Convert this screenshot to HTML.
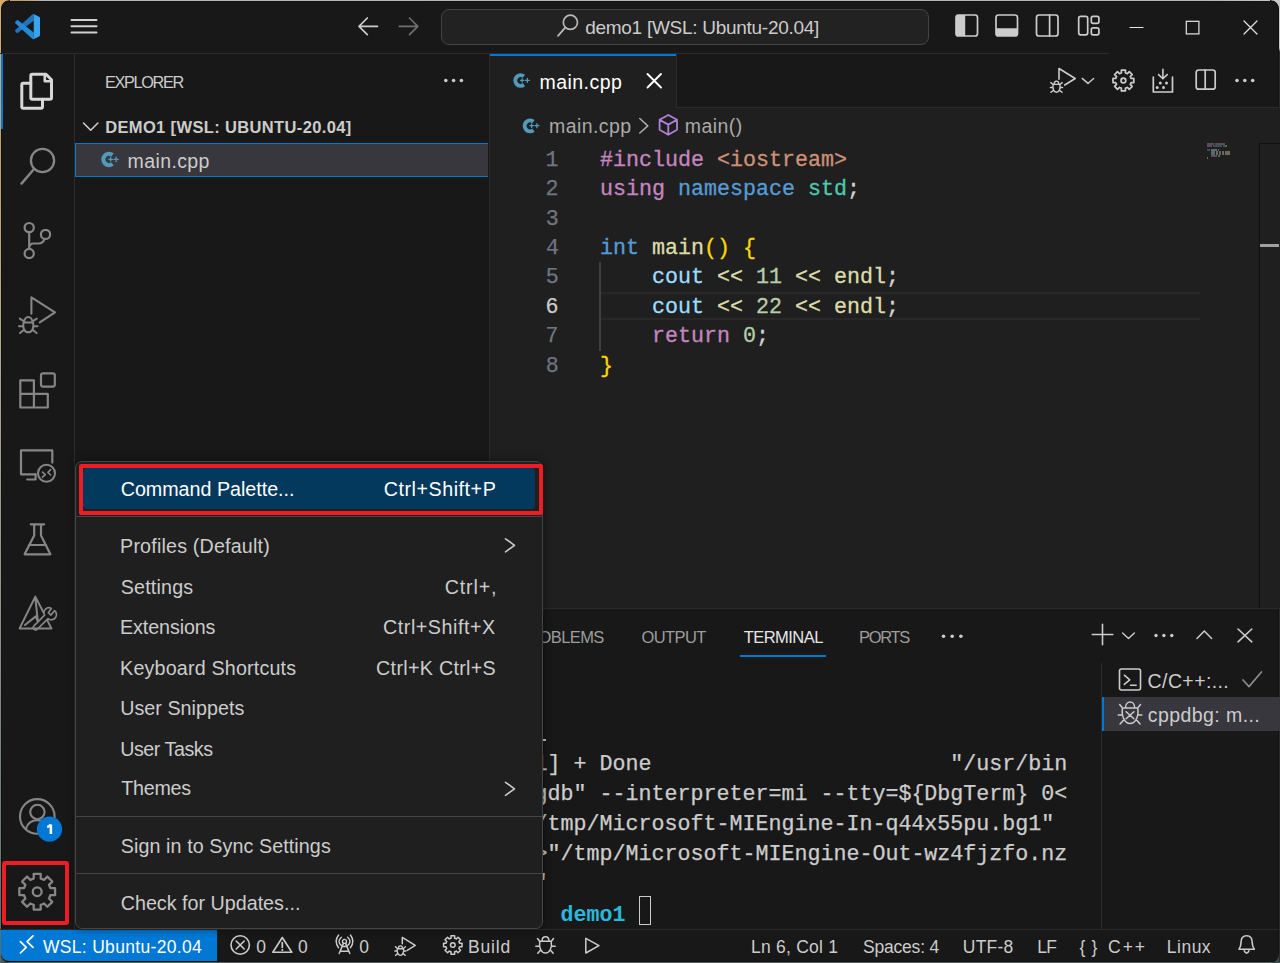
<!DOCTYPE html>
<html><head><meta charset="utf-8">
<style>
*{box-sizing:border-box;margin:0;padding:0}
html,body{width:1280px;height:963px;overflow:hidden;background:#181818}
body{position:relative;font-family:"Liberation Sans",sans-serif;color:#cccccc}
.a{position:absolute}
.t{position:absolute;white-space:pre;line-height:1}
svg{position:absolute;overflow:visible}
</style></head>
<body>
<div class="a" style="left:0px;top:0px;width:1280px;height:963px;background:#181818;"></div>
<div class="a" style="left:0;top:0;width:1280px;height:1px;background:linear-gradient(90deg,#c9a060 0,#c0a070 25px,#b8b8b8 45px,#b5b5b5 1200px,#c8c8c8 100%)"></div>
<div class="a" style="left:0;top:0;width:1px;height:963px;background:linear-gradient(180deg,#d8b070 0,#c0a070 150px,#b0a890 350px,#8a9088 650px,#5a6a68 100%)"></div>
<div class="a" style="left:1279px;top:0;width:1px;height:963px;background:linear-gradient(180deg,#c8c8c8 0,#c8c8c8 48px,#2c2c2c 52px,#2c2c2c 100%)"></div>
<div class="a" style="left:0;top:962px;width:1280px;height:1px;background:#566563"></div>
<div class="a" style="left:1px;top:1px;width:1278px;height:1px;background:#111111;"></div>
<div class="a" style="left:1px;top:1px;width:1px;height:961px;background:#111111;"></div>
<div class="a" style="left:1278px;top:1px;width:1px;height:961px;background:#111111;"></div>
<div class="a" style="left:1px;top:961px;width:1278px;height:1px;background:#111111;"></div>
<div class="a" style="left:490px;top:108px;width:790px;height:500px;background:#1f1f1f;"></div>
<div class="a" style="left:0px;top:53px;width:1109px;height:1px;background:#2b2b2b;"></div>
<div class="a" style="left:74px;top:54px;width:1px;height:875px;background:#2b2b2b;"></div>
<div class="a" style="left:489px;top:54px;width:1px;height:555px;background:#2b2b2b;"></div>
<div class="a" style="left:676px;top:107px;width:604px;height:1px;background:#2b2b2b;"></div>
<div class="a" style="left:490px;top:54px;width:186px;height:54px;background:#1f1f1f;border-top:2px solid #0078d4;"></div>
<div class="a" style="left:676px;top:54px;width:1px;height:53px;background:#2b2b2b;"></div>
<div class="a" style="left:490px;top:608px;width:790px;height:1px;background:#2b2b2b;"></div>
<div class="a" style="left:0px;top:929px;width:1280px;height:1px;background:#2b2b2b;"></div>
<div class="a" style="left:1px;top:930px;width:216px;height:31px;background:#0078d4;border-bottom-left-radius:8px;"></div>
<div class="a" style="left:441px;top:9px;width:488px;height:36px;background:#222222;border:1px solid #444444;border-radius:8px;"></div>
<div class="t" style="left:585.20px;top:18.22px;font-size:19px;color:#cccccc;font-weight:400;font-family:'Liberation Sans',sans-serif;letter-spacing:-0.277px;">demo1 [WSL: Ubuntu-20.04]</div>
<div class="t" style="left:104.96px;top:74.30px;font-size:16.3px;color:#cccccc;font-weight:400;font-family:'Liberation Sans',sans-serif;letter-spacing:-1.340px;">EXPLORER</div>
<div class="t" style="left:105.19px;top:118.73px;font-size:16.5px;color:#cccccc;font-weight:700;font-family:'Liberation Sans',sans-serif;letter-spacing:0.358px;">DEMO1 [WSL: UBUNTU-20.04]</div>
<div class="a" style="left:75px;top:143px;width:413px;height:34px;background:#37373d;border:1px solid #0078d4;border-right:none;"></div>
<div class="t" style="left:127.61px;top:152.29px;font-size:19.5px;color:#cccccc;font-weight:400;font-family:'Liberation Sans',sans-serif;letter-spacing:0.385px;">main.cpp</div>
<div class="t" style="left:539.51px;top:72.89px;font-size:19.5px;color:#ffffff;font-weight:400;font-family:'Liberation Sans',sans-serif;letter-spacing:0.456px;">main.cpp</div>
<div class="t" style="left:549.01px;top:117.49px;font-size:19.5px;color:#a9a9a9;font-weight:400;font-family:'Liberation Sans',sans-serif;letter-spacing:0.414px;">main.cpp</div>
<div class="t" style="left:684.71px;top:117.49px;font-size:19.5px;color:#a9a9a9;font-weight:400;font-family:'Liberation Sans',sans-serif;letter-spacing:0.447px;">main()</div>
<div class="t" style="left:600.00px;top:149.69px;font-size:21.67px;color:#c586c0;font-family:'Liberation Mono',monospace;-webkit-text-stroke:0.3px #c586c0">#include</div>
<div class="t" style="left:717.00px;top:149.69px;font-size:21.67px;color:#ce9178;font-family:'Liberation Mono',monospace;-webkit-text-stroke:0.3px #ce9178">&lt;iostream&gt;</div>
<div class="t" style="left:600.00px;top:179.14px;font-size:21.67px;color:#c586c0;font-family:'Liberation Mono',monospace;-webkit-text-stroke:0.3px #c586c0">using</div>
<div class="t" style="left:678.00px;top:179.14px;font-size:21.67px;color:#569cd6;font-family:'Liberation Mono',monospace;-webkit-text-stroke:0.3px #569cd6">namespace</div>
<div class="t" style="left:808.00px;top:179.14px;font-size:21.67px;color:#4ec9b0;font-family:'Liberation Mono',monospace;-webkit-text-stroke:0.3px #4ec9b0">std</div>
<div class="t" style="left:847.00px;top:179.14px;font-size:21.67px;color:#d4d4d4;font-family:'Liberation Mono',monospace;-webkit-text-stroke:0.3px #d4d4d4">;</div>
<div class="t" style="left:600.00px;top:238.04px;font-size:21.67px;color:#569cd6;font-family:'Liberation Mono',monospace;-webkit-text-stroke:0.3px #569cd6">int</div>
<div class="t" style="left:652.00px;top:238.04px;font-size:21.67px;color:#dcdcaa;font-family:'Liberation Mono',monospace;-webkit-text-stroke:0.3px #dcdcaa">main</div>
<div class="t" style="left:704.00px;top:238.04px;font-size:21.67px;color:#ffd700;font-family:'Liberation Mono',monospace;-webkit-text-stroke:0.3px #ffd700">()</div>
<div class="t" style="left:743.00px;top:238.04px;font-size:21.67px;color:#ffd700;font-family:'Liberation Mono',monospace;-webkit-text-stroke:0.3px #ffd700">{</div>
<div class="t" style="left:652.00px;top:267.49px;font-size:21.67px;color:#9cdcfe;font-family:'Liberation Mono',monospace;-webkit-text-stroke:0.3px #9cdcfe">cout</div>
<div class="t" style="left:717.00px;top:267.49px;font-size:21.67px;color:#dcdcaa;font-family:'Liberation Mono',monospace;-webkit-text-stroke:0.3px #dcdcaa">&lt;&lt;</div>
<div class="t" style="left:756.00px;top:267.49px;font-size:21.67px;color:#b5cea8;font-family:'Liberation Mono',monospace;-webkit-text-stroke:0.3px #b5cea8">11</div>
<div class="t" style="left:795.00px;top:267.49px;font-size:21.67px;color:#dcdcaa;font-family:'Liberation Mono',monospace;-webkit-text-stroke:0.3px #dcdcaa">&lt;&lt;</div>
<div class="t" style="left:834.00px;top:267.49px;font-size:21.67px;color:#dcdcaa;font-family:'Liberation Mono',monospace;-webkit-text-stroke:0.3px #dcdcaa">endl</div>
<div class="t" style="left:886.00px;top:267.49px;font-size:21.67px;color:#d4d4d4;font-family:'Liberation Mono',monospace;-webkit-text-stroke:0.3px #d4d4d4">;</div>
<div class="t" style="left:652.00px;top:296.94px;font-size:21.67px;color:#9cdcfe;font-family:'Liberation Mono',monospace;-webkit-text-stroke:0.3px #9cdcfe">cout</div>
<div class="t" style="left:717.00px;top:296.94px;font-size:21.67px;color:#dcdcaa;font-family:'Liberation Mono',monospace;-webkit-text-stroke:0.3px #dcdcaa">&lt;&lt;</div>
<div class="t" style="left:756.00px;top:296.94px;font-size:21.67px;color:#b5cea8;font-family:'Liberation Mono',monospace;-webkit-text-stroke:0.3px #b5cea8">22</div>
<div class="t" style="left:795.00px;top:296.94px;font-size:21.67px;color:#dcdcaa;font-family:'Liberation Mono',monospace;-webkit-text-stroke:0.3px #dcdcaa">&lt;&lt;</div>
<div class="t" style="left:834.00px;top:296.94px;font-size:21.67px;color:#dcdcaa;font-family:'Liberation Mono',monospace;-webkit-text-stroke:0.3px #dcdcaa">endl</div>
<div class="t" style="left:886.00px;top:296.94px;font-size:21.67px;color:#d4d4d4;font-family:'Liberation Mono',monospace;-webkit-text-stroke:0.3px #d4d4d4">;</div>
<div class="t" style="left:652.00px;top:326.39px;font-size:21.67px;color:#c586c0;font-family:'Liberation Mono',monospace;-webkit-text-stroke:0.3px #c586c0">return</div>
<div class="t" style="left:743.00px;top:326.39px;font-size:21.67px;color:#b5cea8;font-family:'Liberation Mono',monospace;-webkit-text-stroke:0.3px #b5cea8">0</div>
<div class="t" style="left:756.00px;top:326.39px;font-size:21.67px;color:#d4d4d4;font-family:'Liberation Mono',monospace;-webkit-text-stroke:0.3px #d4d4d4">;</div>
<div class="t" style="left:600.00px;top:355.84px;font-size:21.67px;color:#ffd700;font-family:'Liberation Mono',monospace;-webkit-text-stroke:0.3px #ffd700">}</div>
<div class="t" style="left:545.54px;top:149.69px;font-size:21.67px;color:#6e7681;font-weight:400;font-family:'Liberation Mono',monospace;letter-spacing:0.000px;-webkit-text-stroke:0.25px #6e7681;">1</div>
<div class="t" style="left:545.58px;top:179.14px;font-size:21.67px;color:#6e7681;font-weight:400;font-family:'Liberation Mono',monospace;letter-spacing:0.000px;-webkit-text-stroke:0.25px #6e7681;">2</div>
<div class="t" style="left:545.73px;top:208.59px;font-size:21.67px;color:#6e7681;font-weight:400;font-family:'Liberation Mono',monospace;letter-spacing:0.000px;-webkit-text-stroke:0.25px #6e7681;">3</div>
<div class="t" style="left:546.02px;top:238.04px;font-size:21.67px;color:#6e7681;font-weight:400;font-family:'Liberation Mono',monospace;letter-spacing:0.000px;-webkit-text-stroke:0.25px #6e7681;">4</div>
<div class="t" style="left:545.73px;top:267.49px;font-size:21.67px;color:#6e7681;font-weight:400;font-family:'Liberation Mono',monospace;letter-spacing:0.000px;-webkit-text-stroke:0.25px #6e7681;">5</div>
<div class="t" style="left:545.50px;top:296.94px;font-size:21.67px;color:#cccccc;font-weight:400;font-family:'Liberation Mono',monospace;letter-spacing:0.000px;-webkit-text-stroke:0.25px #cccccc;">6</div>
<div class="t" style="left:545.43px;top:326.39px;font-size:21.67px;color:#6e7681;font-weight:400;font-family:'Liberation Mono',monospace;letter-spacing:0.000px;-webkit-text-stroke:0.25px #6e7681;">7</div>
<div class="t" style="left:545.69px;top:355.84px;font-size:21.67px;color:#6e7681;font-weight:400;font-family:'Liberation Mono',monospace;letter-spacing:0.000px;-webkit-text-stroke:0.25px #6e7681;">8</div>
<div class="t" style="left:641.52px;top:628.93px;font-size:16.5px;color:#9d9d9d;font-weight:400;font-family:'Liberation Sans',sans-serif;letter-spacing:-0.615px;">OUTPUT</div>
<div class="t" style="left:743.74px;top:628.93px;font-size:16.5px;color:#e7e7e7;font-weight:400;font-family:'Liberation Sans',sans-serif;letter-spacing:-0.545px;">TERMINAL</div>
<div class="a" style="left:740px;top:655px;width:86px;height:2px;background:#0078d4;"></div>
<div class="t" style="left:859.05px;top:628.93px;font-size:16.5px;color:#9d9d9d;font-weight:400;font-family:'Liberation Sans',sans-serif;letter-spacing:-1.333px;">PORTS</div>
<div class="t" style="left:516.85px;top:628.93px;font-size:16.5px;color:#9d9d9d;font-weight:400;font-family:'Liberation Sans',sans-serif;letter-spacing:-0.600px;">PROBLEMS</div>
<div class="a" style="left:1101px;top:663px;width:1px;height:266px;background:#2b2b2b;"></div>
<div class="t" style="left:1147.61px;top:672.09px;font-size:19.5px;color:#cccccc;font-weight:400;font-family:'Liberation Sans',sans-serif;letter-spacing:0.391px;">C/C++:...</div>
<div class="a" style="left:1102px;top:697px;width:178px;height:34px;background:#37373d;"></div>
<div class="a" style="left:1102px;top:697px;width:2px;height:34px;background:#0078d4;"></div>
<div class="t" style="left:1147.78px;top:705.99px;font-size:19.5px;color:#cccccc;font-weight:400;font-family:'Liberation Sans',sans-serif;letter-spacing:0.426px;">cppdbg: m...</div>
<div class="a" style="left:1px;top:54px;width:2.4px;height:75px;background:#0078d4;"></div>
<div class="a" style="left:600px;top:292px;width:600px;height:2px;background:#282828;"></div>
<div class="a" style="left:600px;top:318px;width:600px;height:2px;background:#282828;"></div>
<div class="a" style="left:599px;top:262px;width:2px;height:89px;background:#404040;"></div>
<div class="a" style="left:1259px;top:143px;width:1px;height:465px;background:#111111;"></div>
<div class="a" style="left:1259px;top:143px;width:21px;height:1px;background:#111111;"></div>
<div class="a" style="left:1260px;top:244px;width:19px;height:3px;background:#a0a0a0;"></div>
<div class="a" style="left:1206.9px;top:143.2px;width:7.0px;height:1.5px;background:#c586c0;opacity:.4;"></div>
<div class="a" style="left:1214.9px;top:143.2px;width:10.0px;height:1.5px;background:#ce9178;opacity:.4;"></div>
<div class="a" style="left:1206.9px;top:145.2px;width:5.0px;height:1.5px;background:#c586c0;opacity:.4;"></div>
<div class="a" style="left:1212.9px;top:145.2px;width:9.0px;height:1.5px;background:#569cd6;opacity:.4;"></div>
<div class="a" style="left:1222.9px;top:145.2px;width:3.0px;height:1.5px;background:#4ec9b0;opacity:.4;"></div>
<div class="a" style="left:1225.9px;top:145.2px;width:1.0px;height:1.5px;background:#d4d4d4;opacity:.4;"></div>
<div class="a" style="left:1206.9px;top:149.2px;width:3.0px;height:1.5px;background:#569cd6;opacity:.4;"></div>
<div class="a" style="left:1210.9px;top:149.2px;width:4.0px;height:1.5px;background:#dcdcaa;opacity:.4;"></div>
<div class="a" style="left:1214.9px;top:149.2px;width:2.0px;height:1.5px;background:#d4d4d4;opacity:.4;"></div>
<div class="a" style="left:1217.9px;top:149.2px;width:1.0px;height:1.5px;background:#d4d4d4;opacity:.4;"></div>
<div class="a" style="left:1210.9px;top:151.2px;width:4.0px;height:1.5px;background:#9cdcfe;opacity:.4;"></div>
<div class="a" style="left:1215.9px;top:151.2px;width:2.0px;height:1.5px;background:#d4d4d4;opacity:.4;"></div>
<div class="a" style="left:1218.9px;top:151.2px;width:2.0px;height:1.5px;background:#b5cea8;opacity:.4;"></div>
<div class="a" style="left:1221.9px;top:151.2px;width:2.0px;height:1.5px;background:#d4d4d4;opacity:.4;"></div>
<div class="a" style="left:1224.9px;top:151.2px;width:5.0px;height:1.5px;background:#dcdcaa;opacity:.4;"></div>
<div class="a" style="left:1210.9px;top:153.2px;width:4.0px;height:1.5px;background:#9cdcfe;opacity:.4;"></div>
<div class="a" style="left:1215.9px;top:153.2px;width:2.0px;height:1.5px;background:#d4d4d4;opacity:.4;"></div>
<div class="a" style="left:1218.9px;top:153.2px;width:2.0px;height:1.5px;background:#b5cea8;opacity:.4;"></div>
<div class="a" style="left:1221.9px;top:153.2px;width:2.0px;height:1.5px;background:#d4d4d4;opacity:.4;"></div>
<div class="a" style="left:1224.9px;top:153.2px;width:5.0px;height:1.5px;background:#dcdcaa;opacity:.4;"></div>
<div class="a" style="left:1210.9px;top:155.2px;width:6.0px;height:1.5px;background:#c586c0;opacity:.4;"></div>
<div class="a" style="left:1217.9px;top:155.2px;width:2.0px;height:1.5px;background:#b5cea8;opacity:.4;"></div>
<div class="a" style="left:1206.9px;top:157.2px;width:1.0px;height:1.5px;background:#d4d4d4;opacity:.4;"></div>
<svg style="left:0;top:0" width="1280" height="963" viewBox="0 0 1280 963"><g transform="translate(15,14) scale(0.25)"><path fill="#1f74bd" d="M1.1 64 L68.8 2.1 Q71 0 75 1 L75 27 L12 75.4 Q9 77 6.6 75.2 L1.1 70.2 Q-0.7 67 1.1 64 Z"/><path fill="#238ada" d="M1.1 36.7 Q-0.7 33 1.1 30.6 L6.6 25.6 Q9 23.5 12 25.3 L75 73.7 V99 Q71 101 68.8 98.7 Z"/><path fill="#3aa3f0" d="M75.86.87 96.46 10.8A6.24 6.24 0 0 1 100 16.44V84.3a6.24 6.24 0 0 1-3.54 5.64L75.86 99.87a6.23 6.23 0 0 1-7.1-1.2c2.3 2.3 6.26.67 6.26-2.6V4.67c0-3.27-3.96-4.9-6.26-2.6a6.23 6.23 0 0 1 7.1-1.2Z"/></g><path d="M71.5 20 H96.5 M71.5 26.3 H96.5 M71.5 32.6 H96.5" fill="none" stroke="#d0d0d0" stroke-width="2" stroke-linecap="round" stroke-linejoin="round" stroke-linecap="butt"/><path d="M377.5 26.3 H359.3 M367.3 18 L359 26.3 L367.3 34.6" fill="none" stroke="#cccccc" stroke-width="1.7" stroke-linecap="round" stroke-linejoin="round" /><path d="M399.3 26.3 H417.5 M409.5 18 L417.8 26.3 L409.5 34.6" fill="none" stroke="#6f6f6f" stroke-width="1.7" stroke-linecap="round" stroke-linejoin="round" /><circle cx="570.4" cy="22.3" r="7.1" fill="none" stroke="#b8b8b8" stroke-width="1.7"/><path d="M565.2 27.6 L558 35.8" fill="none" stroke="#b8b8b8" stroke-width="1.8" stroke-linecap="round" stroke-linejoin="round" /><rect x="956" y="15" width="21.5" height="21" rx="2.5" fill="none" stroke="#cccccc" stroke-width="1.7"/><path d="M956 17.5 Q956 15 958.5 15 H965.2 V36 H958.5 Q956 36 956 33.5 Z" fill="#cccccc" /><rect x="996" y="15" width="21.5" height="21" rx="2.5" fill="none" stroke="#cccccc" stroke-width="1.7"/><path d="M996 28.3 H1017.5 V33.5 Q1017.5 36 1015 36 H998.5 Q996 36 996 33.5 Z" fill="#cccccc" /><rect x="1036.5" y="15" width="21.5" height="21" rx="2.5" fill="none" stroke="#cccccc" stroke-width="1.7"/><path d="M1049.6 15 V36" fill="none" stroke="#cccccc" stroke-width="1.7" stroke-linecap="round" stroke-linejoin="round" /><rect x="1078.7" y="16.3" width="9" height="18.5" rx="2" fill="none" stroke="#cccccc" stroke-width="1.7"/><rect x="1091.3" y="16.3" width="7.6" height="7" rx="1.8" fill="none" stroke="#cccccc" stroke-width="1.7"/><rect x="1091.3" y="27.8" width="7.6" height="7" rx="1.8" fill="none" stroke="#cccccc" stroke-width="1.7"/><path d="M1130 27.5 H1143" fill="none" stroke="#e6e6e6" stroke-width="1.2" stroke-linecap="round" stroke-linejoin="round" stroke-linecap="butt"/><rect x="1186.3" y="21.3" width="12.6" height="12.6" rx="0" fill="none" stroke="#e6e6e6" stroke-width="1.2"/><path d="M1244 21 L1257 34 M1257 21 L1244 34" fill="none" stroke="#e6e6e6" stroke-width="1.2" stroke-linecap="round" stroke-linejoin="round" stroke-linecap="butt"/><path d="M32.3 74.3 H46 L51.5 79.8 V97.8 Q51.5 99.3 50 99.3 H32.3 Q30.8 99.3 30.8 97.8 V75.8 Q30.8 74.3 32.3 74.3 Z" fill="none" stroke="#d7d7d7" stroke-width="3" stroke-linecap="round" stroke-linejoin="round" stroke-linejoin="miter"/><path d="M44.8 74.5 V81.2 H51.3" fill="none" stroke="#d7d7d7" stroke-width="2.6" stroke-linecap="round" stroke-linejoin="round" stroke-linejoin="miter"/><path d="M30.8 83.3 H23.3 Q21.8 83.3 21.8 84.8 V106.8 Q21.8 108.3 23.3 108.3 H41 Q42.5 108.3 42.5 106.8 V99.3" fill="none" stroke="#d7d7d7" stroke-width="3" stroke-linecap="round" stroke-linejoin="round" stroke-linejoin="miter"/><circle cx="42.5" cy="160.5" r="11.6" fill="none" stroke="#868686" stroke-width="2.3"/><path d="M34.2 168.8 L21.5 183.6" fill="none" stroke="#868686" stroke-width="2.4" stroke-linecap="round" stroke-linejoin="round" stroke-linecap="butt"/><circle cx="29.2" cy="227.6" r="4.6" fill="none" stroke="#868686" stroke-width="2.2"/><circle cx="29.2" cy="253.5" r="4.6" fill="none" stroke="#868686" stroke-width="2.2"/><circle cx="45.5" cy="234.4" r="4.6" fill="none" stroke="#868686" stroke-width="2.2"/><path d="M29.2 232.2 V248.9 M44.5 239 Q43 243.5 38.5 243.5 H33.5 Q29.8 243.5 29.2 247.5" fill="none" stroke="#868686" stroke-width="2.2" stroke-linecap="round" stroke-linejoin="round" /><path d="M31.4 313.8 V297.4 L55 312.3 L39.8 322.4" fill="none" stroke="#868686" stroke-width="2.1" stroke-linecap="round" stroke-linejoin="round" stroke-linecap="butt" stroke-linejoin="miter"/><path d="M23.5 322.6 C22.4 328 24.5 332.3 28.3 332.3 C32.1 332.3 34.2 328 33.1 322.6 Z M24.2 322.6 C24.2 315.2 32.4 315.2 32.4 322.6 M23.3 320.8 L19.8 318.6 M33.3 320.8 L36.8 318.6 M22.9 326.2 H19 M33.7 326.2 H37.6 M23.4 330.2 L20 333 M33.2 330.2 L36.6 333" fill="none" stroke="#868686" stroke-width="2.0" stroke-linecap="round" stroke-linejoin="round" /><path d="M20.3 380.3 H33.9 V393.9 H47.8 V407.5 H20.3 Z M33.9 393.9 V407.5 M20.3 393.9 H33.9" fill="none" stroke="#868686" stroke-width="2.2" stroke-linecap="round" stroke-linejoin="round" stroke-linejoin="round"/><rect x="41" y="373.3" width="13.8" height="13.3" rx="2" fill="none" stroke="#868686" stroke-width="2.2"/><path d="M35.6 474.3 H21 V450.4 H52.3 V462.6" fill="none" stroke="#868686" stroke-width="2.2" stroke-linecap="round" stroke-linejoin="round" stroke-linecap="butt" stroke-linejoin="round"/><path d="M27.2 479.5 H35.6 V474.3" fill="none" stroke="#868686" stroke-width="2.2" stroke-linecap="round" stroke-linejoin="round" stroke-linecap="butt" stroke-linejoin="round"/><circle cx="46.5" cy="473.2" r="8.5" fill="none" stroke="#868686" stroke-width="2.0"/><path d="M42.5 472.1 L45.3 474.6 L42.5 477.2 M50.7 469.7 L47.9 472.3 L50.7 475" fill="none" stroke="#868686" stroke-width="1.6" stroke-linecap="round" stroke-linejoin="round" /><path d="M30.8 524.3 H44.2 M34.2 524.3 V535.5 L24.6 554.3 H50.4 L41 535.5 V524.3 M28.9 545 H46.1" fill="none" stroke="#868686" stroke-width="2.2" stroke-linecap="round" stroke-linejoin="round" stroke-linejoin="round"/><path d="M43.4 612.2 L35.3 596.6 L19.6 628.4 H51.4 L47.3 620.4 M35.3 597.5 L37.9 621.6 M25 625 L35.7 616.4 L37.9 621.6" fill="none" stroke="#868686" stroke-width="2.0" stroke-linecap="round" stroke-linejoin="round" stroke-linejoin="round"/><path d="M54.6 610.6 A5 5 0 1 1 48 618.6 L37.4 629.2 A2.4 2.4 0 0 1 34 625.8 L44.6 615.2 A5 5 0 0 1 51.4 608.4 L48.3 612.7 L50.8 615.1 Z" fill="none" stroke="#868686" stroke-width="1.7" stroke-linecap="round" stroke-linejoin="round" stroke-linejoin="round"/><circle cx="37.3" cy="816.4" r="17.3" fill="none" stroke="#868686" stroke-width="2.1"/><circle cx="37.4" cy="812" r="7.2" fill="none" stroke="#868686" stroke-width="2.1"/><path d="M26 828.6 Q28.5 820.2 37.4 820.2 Q46.3 820.2 48.8 828.6" fill="none" stroke="#868686" stroke-width="2.1" stroke-linecap="round" stroke-linejoin="round" /><circle cx="49.5" cy="829.2" r="12.6" fill="#0078d4"/><path d="M33.20 878.70 L33.71 878.55 L33.68 873.84 L40.72 873.84 L40.69 878.55 L41.20 878.70 L43.56 879.68 L44.03 879.94 L47.34 876.59 L52.31 881.56 L48.96 884.87 L49.22 885.34 L50.20 887.70 L50.35 888.21 L55.06 888.18 L55.06 895.22 L50.35 895.19 L50.20 895.70 L49.22 898.06 L48.96 898.53 L52.31 901.84 L47.34 906.81 L44.03 903.46 L43.56 903.72 L41.20 904.70 L40.69 904.85 L40.72 909.56 L33.68 909.56 L33.71 904.85 L33.20 904.70 L30.84 903.72 L30.37 903.46 L27.06 906.81 L22.09 901.84 L25.44 898.53 L25.18 898.06 L24.20 895.70 L24.05 895.19 L19.34 895.22 L19.34 888.18 L24.05 888.21 L24.20 887.70 L25.18 885.34 L25.44 884.87 L22.09 881.56 L27.06 876.59 L30.37 879.94 L30.84 879.68 Z" fill="none" stroke="#868686" stroke-width="2.3" stroke-linecap="round" stroke-linejoin="round" /><circle cx="37.2" cy="891.7" r="4.4" fill="none" stroke="#868686" stroke-width="2.3"/><path d="M83.5 123 L90.7 130.2 L97.9 123" fill="none" stroke="#cccccc" stroke-width="1.6" stroke-linecap="round" stroke-linejoin="round" /><circle cx="445.8" cy="80.5" r="1.8" fill="#cccccc"/><circle cx="453.6" cy="80.5" r="1.8" fill="#cccccc"/><circle cx="461.4" cy="80.5" r="1.8" fill="#cccccc"/><path d="M112.48 155.00 A5.65 5.65 0 1 0 112.48 163.90" fill="none" stroke="#519aba" stroke-width="4.20"/><path d="M108.80 159.30 H112.40 M110.60 157.50 V161.10" fill="none" stroke="#519aba" stroke-width="1.35" stroke-linecap="round" stroke-linejoin="round" stroke-linecap="butt"/><path d="M113.90 159.30 H118.30 M116.10 157.10 V161.50" fill="none" stroke="#519aba" stroke-width="1.35" stroke-linecap="round" stroke-linejoin="round" stroke-linecap="butt"/><path d="M523.90 76.30 A5.31 5.31 0 1 0 523.90 84.67" fill="none" stroke="#519aba" stroke-width="3.95"/><path d="M520.44 80.34 H523.83 M522.14 78.65 V82.04" fill="none" stroke="#519aba" stroke-width="1.269" stroke-linecap="round" stroke-linejoin="round" stroke-linecap="butt"/><path d="M525.24 80.34 H529.37 M527.31 78.28 V82.41" fill="none" stroke="#519aba" stroke-width="1.269" stroke-linecap="round" stroke-linejoin="round" stroke-linecap="butt"/><path d="M647.5 74 L661 87.5 M661 74 L647.5 87.5" fill="none" stroke="#ffffff" stroke-width="1.9" stroke-linecap="round" stroke-linejoin="round" stroke-linecap="butt"/><path d="M533.43 121.57 A5.42 5.42 0 1 0 533.43 130.11" fill="none" stroke="#519aba" stroke-width="4.03"/><path d="M529.90 125.70 H533.35 M531.62 123.97 V127.42" fill="none" stroke="#519aba" stroke-width="1.296" stroke-linecap="round" stroke-linejoin="round" stroke-linecap="butt"/><path d="M534.79 125.70 H539.02 M536.90 123.58 V127.81" fill="none" stroke="#519aba" stroke-width="1.296" stroke-linecap="round" stroke-linejoin="round" stroke-linecap="butt"/><path d="M639.8 118.5 L647.8 125.8 L639.8 133" fill="none" stroke="#a9a9a9" stroke-width="1.6" stroke-linecap="round" stroke-linejoin="round" /><path d="M668.3 115 L677 119.8 V129.8 L668.3 134.8 L659.6 129.8 V119.8 Z M659.6 119.8 L668.3 124.6 L677 119.8 M668.3 124.6 V134.8" fill="none" stroke="#b180d7" stroke-width="1.8" stroke-linecap="round" stroke-linejoin="round" stroke-linejoin="round"/><path d="M1059 79.3 V68.5 L1075.2 78.5 L1064.7 85" fill="none" stroke="#cccccc" stroke-width="1.6" stroke-linecap="round" stroke-linejoin="round" stroke-linecap="butt" stroke-linejoin="miter"/><path d="M1053.1 84.4 C1052.3 89 1054 92.3 1056.5 92.3 C1059 92.3 1060.7 89 1059.9 84.4 Z M1054.1 84.4 C1054.1 80 1058.9 80 1058.9 84.4 M1053 84.5 L1050.8 82.6 M1060 84.5 L1062.2 82.6 M1052.7 87.5 H1050.4 M1060.3 87.5 H1062.6 M1053.2 90.6 L1050.9 92.3 M1059.8 90.6 L1062.1 92.3" fill="none" stroke="#cccccc" stroke-width="1.4" stroke-linecap="round" stroke-linejoin="round" /><path d="M1082.2 78.4 L1088 83.4 L1093.6 78.4" fill="none" stroke="#cccccc" stroke-width="1.4" stroke-linecap="round" stroke-linejoin="round" /><path d="M1121.08 72.95 L1121.38 72.86 L1121.35 70.10 L1125.45 70.10 L1125.42 72.86 L1125.72 72.95 L1127.10 73.52 L1127.37 73.67 L1129.31 71.70 L1132.20 74.59 L1130.23 76.53 L1130.38 76.80 L1130.95 78.18 L1131.04 78.48 L1133.80 78.45 L1133.80 82.55 L1131.04 82.52 L1130.95 82.82 L1130.38 84.20 L1130.23 84.47 L1132.20 86.41 L1129.31 89.30 L1127.37 87.33 L1127.10 87.48 L1125.72 88.05 L1125.42 88.14 L1125.45 90.90 L1121.35 90.90 L1121.38 88.14 L1121.08 88.05 L1119.70 87.48 L1119.43 87.33 L1117.49 89.30 L1114.60 86.41 L1116.57 84.47 L1116.42 84.20 L1115.85 82.82 L1115.76 82.52 L1113.00 82.55 L1113.00 78.45 L1115.76 78.48 L1115.85 78.18 L1116.42 76.80 L1116.57 76.53 L1114.60 74.59 L1117.49 71.70 L1119.43 73.67 L1119.70 73.52 Z" fill="none" stroke="#cccccc" stroke-width="1.7" stroke-linecap="round" stroke-linejoin="round" /><circle cx="1123.4" cy="80.5" r="2.4" fill="none" stroke="#cccccc" stroke-width="1.7"/><path d="M1153.3 77 V92 H1172.5 V77" fill="none" stroke="#cccccc" stroke-width="1.7" stroke-linecap="round" stroke-linejoin="round" stroke-linecap="butt" stroke-linejoin="miter"/><path d="M1162.9 69.2 V78.5 M1158.6 74.6 L1162.9 78.8 L1167.2 74.6" fill="none" stroke="#cccccc" stroke-width="1.6" stroke-linecap="round" stroke-linejoin="round" /><circle cx="1160.3" cy="83" r="1.5" fill="#cccccc"/><circle cx="1166.5" cy="83" r="1.5" fill="#cccccc"/><circle cx="1157.2" cy="87.6" r="1.5" fill="#cccccc"/><circle cx="1163.5" cy="87.6" r="1.5" fill="#cccccc"/><rect x="1196.2" y="70" width="19" height="19.2" rx="2.5" fill="none" stroke="#cccccc" stroke-width="1.7"/><path d="M1205.2 70 V89.2" fill="none" stroke="#cccccc" stroke-width="1.7" stroke-linecap="round" stroke-linejoin="round" /><circle cx="1237" cy="80.5" r="1.8" fill="#cccccc"/><circle cx="1244.8" cy="80.5" r="1.8" fill="#cccccc"/><circle cx="1252.7" cy="80.5" r="1.8" fill="#cccccc"/><circle cx="943.5" cy="636.3" r="1.8" fill="#cccccc"/><circle cx="952.2" cy="636.3" r="1.8" fill="#cccccc"/><circle cx="960.9" cy="636.3" r="1.8" fill="#cccccc"/><path d="M1092.3 634.5 H1112.8 M1102.5 624.3 V644.7" fill="none" stroke="#cccccc" stroke-width="1.6" stroke-linecap="round" stroke-linejoin="round" stroke-linecap="butt"/><path d="M1122.6 633 L1128.5 638.5 L1134.4 633" fill="none" stroke="#cccccc" stroke-width="1.4" stroke-linecap="round" stroke-linejoin="round" /><circle cx="1156" cy="635.5" r="1.7" fill="#cccccc"/><circle cx="1163.9" cy="635.5" r="1.7" fill="#cccccc"/><circle cx="1171.8" cy="635.5" r="1.7" fill="#cccccc"/><path d="M1197 638.5 L1204.3 631 L1211.6 638.5" fill="none" stroke="#cccccc" stroke-width="1.5" stroke-linecap="round" stroke-linejoin="round" /><path d="M1238 629 L1251.8 641.8 M1251.8 629 L1238 641.8" fill="none" stroke="#cccccc" stroke-width="1.6" stroke-linecap="round" stroke-linejoin="round" stroke-linecap="butt"/><rect x="1119.5" y="669" width="21" height="21" rx="2" fill="none" stroke="#cccccc" stroke-width="1.6"/><path d="M1124.3 675.2 L1129.8 679.8 L1124.3 684.4 M1130.5 685.2 H1136.2" fill="none" stroke="#cccccc" stroke-width="1.5" stroke-linecap="round" stroke-linejoin="round" /><path d="M1243 680 L1249 686.6 L1261.4 672" fill="none" stroke="#8b8b8b" stroke-width="1.7" stroke-linecap="round" stroke-linejoin="round" /><path d="M1122.5 708 C1121.1 716 1124.6 723.6 1130.1 723.6 C1135.6 723.6 1139.1 716 1137.7 708 Z M1125.5 708 C1125.5 700 1134.7 700 1134.7 708 M1122.5 708 L1119.7 704.6 M1137.7 708 L1140.5 704.6 M1121.8 715 H1118.3 M1138.4 715 H1141.9 M1123.2 720.5 L1120.1 724 M1137 720.5 L1140.1 724 M1126.1 711.7 L1133.9 718.8 M1133.9 711.7 L1126.1 718.8" fill="none" stroke="#cccccc" stroke-width="1.5" stroke-linecap="round" stroke-linejoin="round" /></svg>
<div class="t" style="left:521.5px;top:753.89px;font-size:21.67px;color:#cccccc;font-family:'Liberation Mono',monospace;-webkit-text-stroke:0.25px #cccccc">[1] + Done                       "/usr/bin</div>
<div class="t" style="left:521.5px;top:783.79px;font-size:21.67px;color:#cccccc;font-family:'Liberation Mono',monospace;-webkit-text-stroke:0.25px #cccccc">/gdb" --interpreter=mi --tty=${DbgTerm} 0&lt;</div>
<div class="t" style="left:521.5px;top:813.69px;font-size:21.67px;color:#cccccc;font-family:'Liberation Mono',monospace;-webkit-text-stroke:0.25px #cccccc">"/tmp/Microsoft-MIEngine-In-q44x55pu.bg1" </div>
<div class="t" style="left:521.5px;top:843.59px;font-size:21.67px;color:#cccccc;font-family:'Liberation Mono',monospace;-webkit-text-stroke:0.25px #cccccc">1&gt;"/tmp/Microsoft-MIEngine-Out-wz4fjzfo.nz</div>
<div class="t" style="left:521.5px;top:873.49px;font-size:21.67px;color:#cccccc;font-family:'Liberation Mono',monospace;-webkit-text-stroke:0.25px #cccccc"> "</div>
<div class="a" style="left:543px;top:739px;width:3px;height:2px;background:#cccccc;"></div>
<div class="t" style="left:560.5px;top:904.89px;font-size:21.67px;color:#29b8db;font-weight:700;font-family:'Liberation Mono',monospace">demo1</div>
<div class="a" style="left:638.5px;top:896px;width:12.5px;height:29px;background:transparent;border:1.5px solid #cccccc;"></div>
<div class="a" style="left:75px;top:461px;width:468px;height:468px;background:#1f1f1f;border:1px solid #454545;border-radius:7px;box-shadow:0 0 8px rgba(0,0,0,.5);"></div>
<div class="a" style="left:83px;top:468px;width:452px;height:41px;background:#04395e;border-radius:4px;"></div>
<div class="a" style="left:79px;top:464px;width:464px;height:51px;background:transparent;border:4px solid #ee1c25;border-radius:2px;"></div>
<div class="a" style="left:76px;top:516px;width:466px;height:1px;background:#454545;"></div>
<div class="a" style="left:76px;top:816px;width:466px;height:1px;background:#454545;"></div>
<div class="a" style="left:76px;top:873px;width:466px;height:1px;background:#454545;"></div>
<div class="t" style="left:120.70px;top:479.82px;font-size:19.7px;color:#ffffff;font-weight:400;font-family:'Liberation Sans',sans-serif;letter-spacing:-0.012px;">Command Palette...</div>
<div class="t" style="left:383.70px;top:479.82px;font-size:19.7px;color:#ffffff;font-weight:400;font-family:'Liberation Sans',sans-serif;letter-spacing:0.541px;">Ctrl+Shift+P</div>
<div class="t" style="left:120.08px;top:536.92px;font-size:19.7px;color:#cccccc;font-weight:400;font-family:'Liberation Sans',sans-serif;letter-spacing:0.178px;">Profiles (Default)</div>
<div class="t" style="left:120.81px;top:578.32px;font-size:19.7px;color:#cccccc;font-weight:400;font-family:'Liberation Sans',sans-serif;letter-spacing:0.174px;">Settings</div>
<div class="t" style="left:444.70px;top:578.32px;font-size:19.7px;color:#cccccc;font-weight:400;font-family:'Liberation Sans',sans-serif;letter-spacing:0.853px;">Ctrl+,</div>
<div class="t" style="left:120.08px;top:618.02px;font-size:19.7px;color:#cccccc;font-weight:400;font-family:'Liberation Sans',sans-serif;letter-spacing:-0.105px;">Extensions</div>
<div class="t" style="left:383.00px;top:618.02px;font-size:19.7px;color:#cccccc;font-weight:400;font-family:'Liberation Sans',sans-serif;letter-spacing:0.547px;">Ctrl+Shift+X</div>
<div class="t" style="left:120.08px;top:658.92px;font-size:19.7px;color:#cccccc;font-weight:400;font-family:'Liberation Sans',sans-serif;letter-spacing:0.182px;">Keyboard Shortcuts</div>
<div class="t" style="left:376.10px;top:658.92px;font-size:19.7px;color:#cccccc;font-weight:400;font-family:'Liberation Sans',sans-serif;letter-spacing:0.298px;">Ctrl+K Ctrl+S</div>
<div class="t" style="left:120.18px;top:698.72px;font-size:19.7px;color:#cccccc;font-weight:400;font-family:'Liberation Sans',sans-serif;letter-spacing:0.041px;">User Snippets</div>
<div class="t" style="left:120.18px;top:739.62px;font-size:19.7px;color:#cccccc;font-weight:400;font-family:'Liberation Sans',sans-serif;letter-spacing:-0.460px;">User Tasks</div>
<div class="t" style="left:121.27px;top:779.42px;font-size:19.7px;color:#cccccc;font-weight:400;font-family:'Liberation Sans',sans-serif;letter-spacing:-0.243px;">Themes</div>
<div class="t" style="left:120.81px;top:837.32px;font-size:19.7px;color:#cccccc;font-weight:400;font-family:'Liberation Sans',sans-serif;letter-spacing:0.088px;">Sign in to Sync Settings</div>
<div class="t" style="left:120.70px;top:893.72px;font-size:19.7px;color:#cccccc;font-weight:400;font-family:'Liberation Sans',sans-serif;letter-spacing:0.012px;">Check for Updates...</div>
<div class="t" style="left:42.93px;top:938.79px;font-size:17.5px;color:#ffffff;font-weight:400;font-family:'Liberation Sans',sans-serif;letter-spacing:0.317px;">WSL: Ubuntu-20.04</div>
<div class="t" style="left:256.32px;top:939.19px;font-size:17.5px;color:#cccccc;font-weight:400;font-family:'Liberation Sans',sans-serif;letter-spacing:0.000px;">0</div>
<div class="t" style="left:298.02px;top:939.19px;font-size:17.5px;color:#cccccc;font-weight:400;font-family:'Liberation Sans',sans-serif;letter-spacing:0.000px;">0</div>
<div class="t" style="left:359.32px;top:939.19px;font-size:17.5px;color:#cccccc;font-weight:400;font-family:'Liberation Sans',sans-serif;letter-spacing:0.000px;">0</div>
<div class="t" style="left:468.06px;top:939.19px;font-size:17.5px;color:#cccccc;font-weight:400;font-family:'Liberation Sans',sans-serif;letter-spacing:0.834px;">Build</div>
<div class="t" style="left:751.07px;top:939.19px;font-size:17.5px;color:#cccccc;font-weight:400;font-family:'Liberation Sans',sans-serif;letter-spacing:0.216px;">Ln 6, Col 1</div>
<div class="t" style="left:862.91px;top:939.19px;font-size:17.5px;color:#cccccc;font-weight:400;font-family:'Liberation Sans',sans-serif;letter-spacing:-0.191px;">Spaces: 4</div>
<div class="t" style="left:962.85px;top:939.19px;font-size:17.5px;color:#cccccc;font-weight:400;font-family:'Liberation Sans',sans-serif;letter-spacing:0.206px;">UTF-8</div>
<div class="t" style="left:1037.27px;top:939.19px;font-size:17.5px;color:#cccccc;font-weight:400;font-family:'Liberation Sans',sans-serif;letter-spacing:-0.788px;">LF</div>
<div class="t" style="left:1108.11px;top:939.19px;font-size:17.5px;color:#cccccc;font-weight:400;font-family:'Liberation Sans',sans-serif;letter-spacing:1.938px;">C++</div>
<div class="t" style="left:1166.87px;top:939.19px;font-size:17.5px;color:#cccccc;font-weight:400;font-family:'Liberation Sans',sans-serif;letter-spacing:0.471px;">Linux</div>
<svg style="left:0;top:0" width="1280" height="963" viewBox="0 0 1280 963"><path d="M505.5 538.8 L514.5 545.3 L505.5 551.8" fill="none" stroke="#cccccc" stroke-width="1.6" stroke-linecap="round" stroke-linejoin="round" /><path d="M505.5 782.3 L514.5 788.8 L505.5 795.3" fill="none" stroke="#cccccc" stroke-width="1.6" stroke-linecap="round" stroke-linejoin="round" /><path d="M20.4 941.6 L26.2 947.3 L20.4 953 M33 935.9 L27.1 941.6 L33 947.3" fill="none" stroke="#ffffff" stroke-width="1.7" stroke-linecap="round" stroke-linejoin="round" /><circle cx="240.2" cy="945" r="9.2" fill="none" stroke="#cccccc" stroke-width="1.6"/><path d="M236.2 941 L244.2 949 M244.2 941 L236.2 949" fill="none" stroke="#cccccc" stroke-width="1.6" stroke-linecap="round" stroke-linejoin="round" /><path d="M282.3 937.5 L291.8 952.3 H272.8 Z" fill="none" stroke="#cccccc" stroke-width="1.6" stroke-linecap="round" stroke-linejoin="round" stroke-linejoin="round"/><path d="M282.3 942.6 V947.4" fill="none" stroke="#cccccc" stroke-width="1.7" stroke-linecap="round" stroke-linejoin="round" stroke-linecap="butt"/><circle cx="282.3" cy="949.9" r="1" fill="#cccccc"/><path d="M343.3 943.6 L339.2 953.5 M345.7 943.6 L349.8 953.5 M341.9 946.6 H347.1 M340.6 951.2 H348.4" fill="none" stroke="#cccccc" stroke-width="1.5" stroke-linecap="round" stroke-linejoin="round" /><circle cx="344.5" cy="941.4" r="2" fill="none" stroke="#cccccc" stroke-width="1.4"/><path d="M341.4 937.3 Q336.6 941.4 341.4 945.5 M347.6 937.3 Q352.4 941.4 347.6 945.5 M338.6 935 Q333.6 941.4 338.6 947.8 M350.4 935 Q355.4 941.4 350.4 947.8" fill="none" stroke="#cccccc" stroke-width="1.4" stroke-linecap="round" stroke-linejoin="round" /><path d="M402.3 943.7 V937.4 L415.2 945.4 L407.2 950.4" fill="none" stroke="#cccccc" stroke-width="1.5" stroke-linecap="round" stroke-linejoin="round" stroke-linecap="butt" stroke-linejoin="miter"/><path d="M397.3 948.7 C396.6 952.5 398.2 955.3 400.4 955.3 C402.6 955.3 404.2 952.5 403.5 948.7 Z M398.3 948.7 C398.3 945 402.5 945 402.5 948.7 M397.3 948.5 L395.4 946.7 M403.5 948.5 L405.4 946.7 M397 951 H394.8 M403.8 951 H406 M397.5 953.6 L395.5 955.4 M403.3 953.6 L405.3 955.4" fill="none" stroke="#cccccc" stroke-width="1.35" stroke-linecap="round" stroke-linejoin="round" /><path d="M450.74 938.31 L451.01 938.23 L450.98 935.78 L454.62 935.78 L454.59 938.23 L454.86 938.31 L456.08 938.81 L456.32 938.95 L458.04 937.19 L460.61 939.76 L458.85 941.48 L458.99 941.72 L459.49 942.94 L459.57 943.21 L462.02 943.18 L462.02 946.82 L459.57 946.79 L459.49 947.06 L458.99 948.28 L458.85 948.52 L460.61 950.24 L458.04 952.81 L456.32 951.05 L456.08 951.19 L454.86 951.69 L454.59 951.77 L454.62 954.22 L450.98 954.22 L451.01 951.77 L450.74 951.69 L449.52 951.19 L449.28 951.05 L447.56 952.81 L444.99 950.24 L446.75 948.52 L446.61 948.28 L446.11 947.06 L446.03 946.79 L443.58 946.82 L443.58 943.18 L446.03 943.21 L446.11 942.94 L446.61 941.72 L446.75 941.48 L444.99 939.76 L447.56 937.19 L449.28 938.95 L449.52 938.81 Z" fill="none" stroke="#cccccc" stroke-width="1.5" stroke-linecap="round" stroke-linejoin="round" /><circle cx="452.8" cy="945" r="2.3" fill="none" stroke="#cccccc" stroke-width="1.5"/><path d="M539.8 941.3 C538.6 947.5 541.3 953 545.5 953 C549.7 953 552.4 947.5 551.2 941.3 Z M542 941.3 C542 935.3 549 935.3 549 941.3 M539.8 941.5 L537.5 938.5 M551.2 941.5 L553.5 938.5 M539.2 946.3 H535.8 M551.8 946.3 H555.2 M540.2 950.5 L537.8 953.3 M550.8 950.5 L553.2 953.3" fill="none" stroke="#cccccc" stroke-width="1.5" stroke-linecap="round" stroke-linejoin="round" /><path d="M585.8 938.3 L599 945.6 L585.8 953 Z" fill="none" stroke="#cccccc" stroke-width="1.5" stroke-linecap="round" stroke-linejoin="round" stroke-linejoin="round"/><path d="M1239 949.3 Q1241 946.5 1241 942.5 Q1241 935.8 1246.6 935.8 Q1252.2 935.8 1252.2 942.5 Q1252.2 946.5 1254.3 949.3 Z M1244.3 950.8 Q1246.6 955.5 1248.9 950.8" fill="none" stroke="#cccccc" stroke-width="1.6" stroke-linecap="round" stroke-linejoin="round" /></svg>
<div class="t" style="left:1079.50px;top:939.19px;font-size:17.5px;color:#cccccc;font-weight:400;font-family:'Liberation Sans',sans-serif;letter-spacing:0.629px;">{ }</div>
<svg style="left:0;top:0" width="1280" height="963" viewBox="0 0 1280 963"><path d="M50.9 824.5 V833.9 M47.2 827.2 Q49.6 826.3 50.9 824.6" fill="none" stroke="#fff" stroke-width="2.5" stroke-linecap="butt"/></svg>
<div class="a" style="left:2px;top:861px;width:67px;height:64px;background:transparent;border:4.3px solid #ee1c25;border-radius:3px;"></div>
<svg style="left:0;top:0" width="1280" height="963" viewBox="0 0 1280 963"><path d="M0 0 H10 Q1 1 1 10 V0 Z" fill="#d0a868"/><path d="M1280 0 H1270 Q1279 1 1279 10 V0 Z" fill="#c8c8c8"/><path d="M0 963 H10 Q1 962 1 953 V963 Z" fill="#4a5654"/><path d="M1280 963 H1270 Q1279 962 1279 953 V963 Z" fill="#3a4a4a"/><path d="M10 0.5 Q1.5 1.5 1.5 10" fill="none" stroke="#111" stroke-width="1"/><path d="M1270 0.5 Q1278.5 1.5 1278.5 10" fill="none" stroke="#111" stroke-width="1"/></svg></body></html>
